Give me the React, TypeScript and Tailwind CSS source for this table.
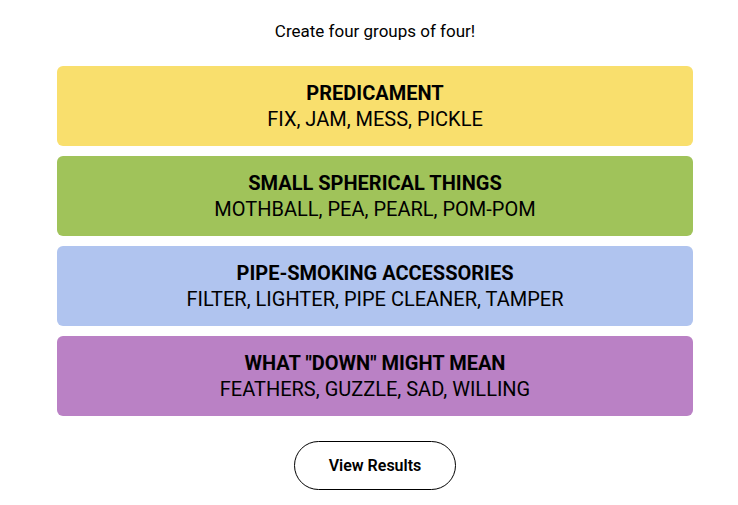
import React from "react";

const groups = [
  { title: "PREDICAMENT", words: "FIX, JAM, MESS, PICKLE", color: "bg-[#f9df6d]" },
  { title: "SMALL SPHERICAL THINGS", words: "MOTHBALL, PEA, PEARL, POM-POM", color: "bg-[#a0c35a]" },
  { title: "PIPE-SMOKING ACCESSORIES", words: "FILTER, LIGHTER, PIPE CLEANER, TAMPER", color: "bg-[#b0c4ef]" },
  { title: 'WHAT "DOWN" MIGHT MEAN', words: "FEATHERS, GUZZLE, SAD, WILLING", color: "bg-[#ba81c5]" },
];

export default function App() {
  return (
    <div className="w-[738px] h-[505px] bg-white text-black pl-[12px]" style={{ fontFamily: "Roboto, 'Liberation Sans', sans-serif" }}>
      <div className="flex flex-col items-center">
        <p className="mt-[20px] text-[17px] leading-[22px]">Create four groups of four!</p>
        <div className="mt-[24px] w-[636px] flex flex-col gap-[10px]">
          {groups.map((g) => (
            <div key={g.title} className={`${g.color} h-[80px] rounded-[6px] flex flex-col items-center justify-center`}>
              <div className="font-bold text-[20px] leading-[26px]">{g.title}</div>
              <div className="text-[20px] leading-[26px]">{g.words}</div>
            </div>
          ))}
        </div>
        <button className="mt-[25px] w-[162px] h-[49px] rounded-full border border-black text-[16px] font-semibold">View Results</button>
      </div>
    </div>
  );
}
